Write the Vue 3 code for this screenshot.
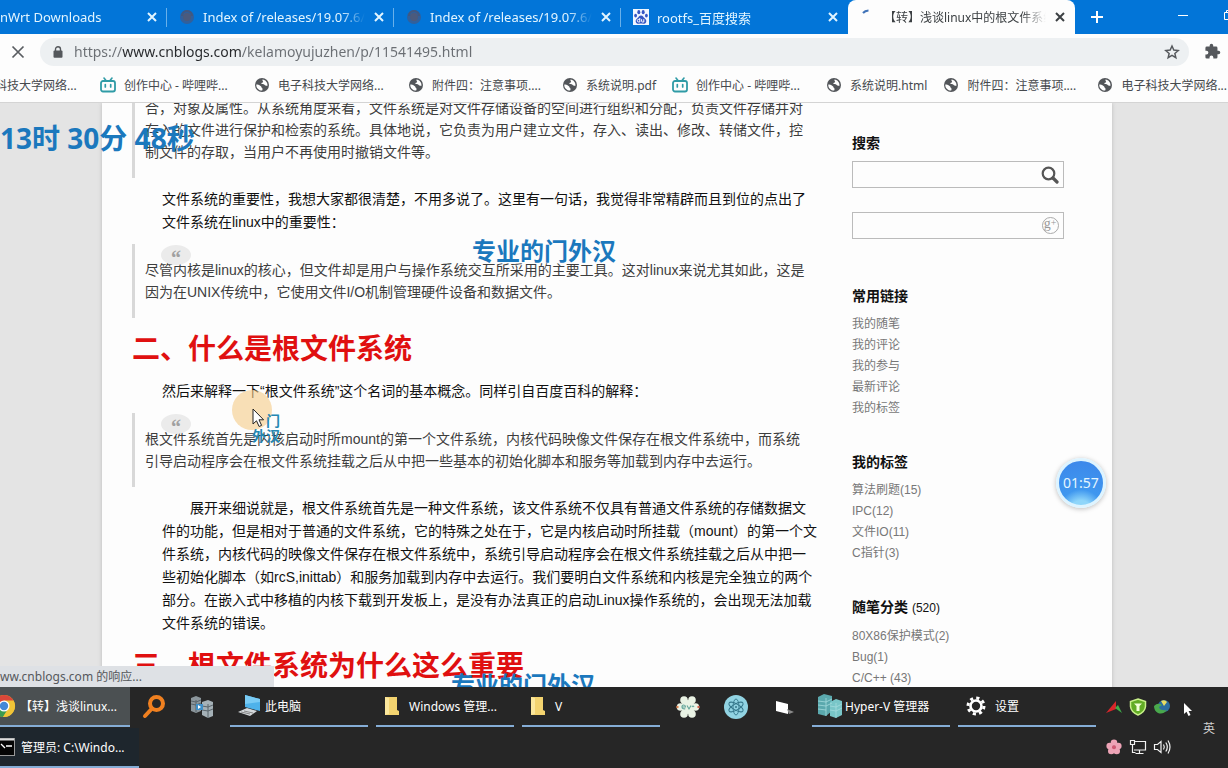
<script setup>

  import { ref } from 'vue';

  const url = ref('https://www.cnblogs.com/kelamoyujuzhen/p/11541495.html');
  const keyword = ref('');
  const googleKeyword = ref('');

  const tabs = ref([
    { title: 'nWrt Downloads', icon: '' },
    { title: 'Index of /releases/19.07.6/targets', icon: 'dot' },
    { title: 'Index of /releases/19.07.6/targets', icon: 'dot' },
    { title: 'rootfs_百度搜索', icon: 'baidu' },
    { title: '【转】浅谈linux中的根文件系统', icon: 'loading', active: true }
  ]);

  const bookmarks = [
    { title: '科技大学网络...', icon: '', long: true },
    { title: '创作中心 - 哔哩哔...', icon: 'tv', long: true },
    { title: '电子科技大学网络...', icon: 'globe', long: true },
    { title: '附件四：注意事项....', icon: 'globe', long: true },
    { title: '系统说明.pdf', icon: 'globe' },
    { title: '创作中心 - 哔哩哔...', icon: 'tv', long: true },
    { title: '系统说明.html', icon: 'globe' },
    { title: '附件四：注意事项....', icon: 'globe', long: true },
    { title: '电子科技大学网络...', icon: 'globe', long: true }
  ];

  const sections = [
    { title: '常用链接', links: ['我的随笔', '我的评论', '我的参与', '最新评论', '我的标签'] },
    { title: '我的标签', links: ['算法刷题(15)', 'IPC(12)', '文件IO(11)', 'C指针(3)'] },
    { title: '随笔分类', count: '(520)', links: ['80X86保护模式(2)', 'Bug(1)', 'C/C++ (43)'] }
  ];

  const closeTab = index => {

    tabs.value.splice(index, 1)

  };

</script>



<template>

  <div class="screen">

    <header class="browser">

      <div class="tabs">
        <div v-for="(tab, index) in tabs" v-bind:key="index" class="tab" :class="{ active: tab.active, first: !tab.icon }">
          <span class="tab-icon" v-if="tab.icon">
            <svg v-if="tab.icon === 'dot'" width="16" height="16" viewBox="0 0 16 16">
              <circle cx="8" cy="8" r="7" fill="#31609c" />
              <circle cx="8" cy="8" r="4" fill="#4b5a7c" />
              <path d="M3 7a5 5 0 0 1 10 0" fill="none" stroke="#42587f" stroke-width="2" />
            </svg>
            <svg v-if="tab.icon === 'baidu'" width="16" height="16" viewBox="0 0 16 16">
              <rect width="16" height="16" fill="#f2f7ff" />
              <g fill="#3556c4">
                <ellipse cx="5.8" cy="3.2" rx="1.5" ry="2.1" />
                <ellipse cx="10.2" cy="3.2" rx="1.5" ry="2.1" />
                <ellipse cx="2.6" cy="6.6" rx="1.4" ry="1.9" />
                <ellipse cx="13.4" cy="6.6" rx="1.4" ry="1.9" />
                <path d="M8 6.4c1.600 0 2.300 1.400 3.400 2.600 1.300 1.300 2.300 2.300 1.800 4-.6 1.900-2.600 1.900-5.200 1.600-2.600.3-4.600.3-5.200-1.600-.5-1.700.5-2.700 1.800-4C5.700 7.800 6.400 6.400 8 6.400z" />
              </g>
              <path d="M6.800 9v4H5.600a1.300 1.300 0 0 1 0-2.600h1.200M8.600 10.200v2q0 .8.8.8h1.400v-2.800" fill="none" stroke="#fff" stroke-width="1" />
            </svg>
            <svg v-if="tab.icon === 'loading'" width="16" height="16" viewBox="0 0 16 16">
              <path d="M3 4q2-2.400 5.500-2.600" fill="none" stroke="#4173b8" stroke-width="2" />
            </svg>
          </span>
          <span class="tab-title">{{ tab.title }}</span>
          <button class="tab-close" aria-label="关闭标签页" @click="closeTab(index)">
            <svg width="10" height="10" viewBox="0 0 10 10"><path d="M1 1l8 8M9 1l-8 8" stroke="currentColor" stroke-width="2" /></svg>
          </button>
        </div>
        <button class="tab-new" aria-label="新标签页">
          <svg width="12" height="12" viewBox="0 0 12 12"><path d="M6 0v12M0 6h12" stroke="#fff" stroke-width="2" /></svg>
        </button>
        <div class="window-buttons">
          <button aria-label="最小化"><svg width="10" height="10" viewBox="0 0 10 10"><path d="M0 5.500h10" stroke="#fff" /></svg></button>
          <button aria-label="还原"><svg width="10" height="10" viewBox="0 0 10 10"><path d="M.5 2.500h7v7h-7zM2.500 2.500v-2h7v7h-2" fill="none" stroke="#fff" /></svg></button>
        </div>
      </div>

      <div class="toolbar">
        <button class="stop" aria-label="停止加载">
          <svg width="14" height="14" viewBox="0 0 14 14"><path d="M1.500 1.500l11 11M12.500 1.500l-11 11" stroke="#5a5d61" stroke-width="1.700" /></svg>
        </button>
        <div class="address">
          <svg width="10" height="12" viewBox="0 0 10 12">
            <path d="M2.500 5V3.200a2.500 2.500 0 0 1 5 0V5" fill="none" stroke="#55585c" stroke-width="1.400" />
            <rect x="0.5" y="4.500" width="9" height="7.200" rx="1" fill="#55585c" />
          </svg>
          <input type="text" v-model="url" aria-label="地址栏" class="url">
          <button aria-label="为此标签页添加书签">
            <svg width="16" height="16" viewBox="0 0 24 24"><path d="M12 3l2.700 6.100 6.600.6-5 4.400 1.500 6.500-5.800-3.400-5.800 3.400 1.500-6.500-5-4.400 6.600-.6z" fill="none" stroke="#55585c" stroke-width="2.200" /></svg>
          </button>
        </div>
        <button class="extensions" aria-label="扩展程序">
          <svg width="17" height="17" viewBox="0 0 24 24"><path d="M20.500 11H19V7a2 2 0 0 0-2-2h-4V3.500a2.500 2.500 0 0 0-5 0V5H4a2 2 0 0 0-2 2v3.800h1.500a2.700 2.700 0 0 1 0 5.400H2V20a2 2 0 0 0 2 2h3.800v-1.500a2.700 2.700 0 0 1 5.400 0V22H17a2 2 0 0 0 2-2v-4h1.500a2.500 2.500 0 0 0 0-5z" fill="#55585c" /></svg>
        </button>
      </div>

      <nav class="bookmarks">
        <a href="#" v-for="(item, index) in bookmarks" v-bind:key="index" class="bookmark" :class="{ long: item.long, first: !item.icon }">
          <svg v-if="item.icon === 'tv'" width="16" height="16" viewBox="0 0 16 16">
            <path d="M4 1l2 2.500M12 1l-2 2.500" stroke="#2f9ba6" stroke-width="1.600" stroke-linecap="round" />
            <rect x="1" y="4" width="14" height="10.500" rx="2" fill="none" stroke="#2f9ba6" stroke-width="1.800" />
            <path d="M5.300 7.500v2.500M10.700 7.500v2.500" stroke="#2f9ba6" stroke-width="1.700" stroke-linecap="round" />
          </svg>
          <svg v-if="item.icon === 'globe'" width="16" height="16" viewBox="0 0 16 16">
            <circle cx="8" cy="8" r="7" fill="#53565a" />
            <path d="M2.300 7.500c2.500-.4 3 .8 4.200 1.400 1.300.5.600 1.600 1.500 2 .9.500.6 1.500.2 2.700-3.300.1-6.200-2.600-5.900-6.100z" fill="#fff" />
            <path d="M8.500 2.400c-.4 1.500.8 1.500.6 2.600-.4 1-1.900.5-1.800 1.500.3 1.200 2.300.3 3.200 1.300.7.8 1.500 1 3 .9.300-3-1.900-6-5-6.300z" fill="#fff" />
          </svg>
          <span>{{ item.title }}</span>
        </a>
      </nav>

    </header>

    <main class="page">

      <div class="home">

        <article class="post">
          <blockquote class="cut">
            合，对象及属性。从系统角度来看，文件系统是对文件存储设备的空间进行组织和分配，负责文件存储并对<br>
            存入的文件进行保护和检索的系统。具体地说，它负责为用户建立文件，存入、读出、修改、转储文件，控<br>
            制文件的存取，当用户不再使用时撤销文件等。
          </blockquote>
          <p>
            文件系统的重要性，我想大家都很清楚，不用多说了。这里有一句话，我觉得非常精辟而且到位的点出了<br>
            文件系统在linux中的重要性：
          </p>
          <blockquote>
            <span class="quote">“</span>
            尽管内核是linux的核心，但文件却是用户与操作系统交互所采用的主要工具。这对linux来说尤其如此，这是<br>
            因为在UNIX传统中，它使用文件I/O机制管理硬件设备和数据文件。
          </blockquote>
          <h1>二、什么是根文件系统</h1>
          <p>然后来解释一下“根文件系统”这个名词的基本概念。同样引自百度百科的解释：</p>
          <blockquote>
            <span class="quote">“</span>
            根文件系统首先是内核启动时所mount的第一个文件系统，内核代码映像文件保存在根文件系统中，而系统<br>
            引导启动程序会在根文件系统挂载之后从中把一些基本的初始化脚本和服务等加载到内存中去运行。
          </blockquote>
          <p class="indent">
            展开来细说就是，根文件系统首先是一种文件系统，该文件系统不仅具有普通文件系统的存储数据文<br>
            件的功能，但是相对于普通的文件系统，它的特殊之处在于，它是内核启动时所挂载（mount）的第一个文<br>
            件系统，内核代码的映像文件保存在根文件系统中，系统引导启动程序会在根文件系统挂载之后从中把一<br>
            些初始化脚本（如rcS,inittab）和服务加载到内存中去运行。我们要明白文件系统和内核是完全独立的两个<br>
            部分。在嵌入式中移植的内核下载到开发板上，是没有办法真正的启动Linux操作系统的，会出现无法加载<br>
            文件系统的错误。
          </p>
          <h1>三、根文件系统为什么这么重要</h1>
        </article>

        <aside class="sidebar">
          <section class="search">
            <h2><label for="keyword">搜索</label></h2>
            <form class="field" @submit.prevent>
              <input type="text" id="keyword" v-model="keyword">
              <button type="submit" aria-label="找找看">
                <svg width="18" height="18" viewBox="0 0 18 18">
                  <circle cx="7.500" cy="7.500" r="5.800" fill="none" stroke="#555" stroke-width="2.200" />
                  <path d="M12 12l4 4" stroke="#555" stroke-width="3.200" stroke-linecap="round" />
                </svg>
              </button>
            </form>
            <form class="field" @submit.prevent>
              <input type="text" v-model="googleKeyword" aria-label="谷歌搜索">
              <button type="submit" aria-label="谷歌搜索"><span class="google">g<sup>+</sup></span></button>
            </form>
          </section>
          <section v-for="section in sections" v-bind:key="section.title">
            <h2>{{ section.title }} <small v-if="section.count">{{ section.count }}</small></h2>
            <ul>
              <li v-for="link in section.links" v-bind:key="link"><a href="#">{{ link }}</a></li>
            </ul>
          </section>
        </aside>

      </div>

      <div class="mark mark-clock">13时 30分 48秒</div>
      <div class="mark mark-middle">专业的门外汉</div>
      <div class="mark mark-bottom">专业的门外汉</div>
      <div class="pointer">
        <span>门<br>外汉</span>
        <svg width="14" height="20" viewBox="0 0 14 20"><path d="M1 1v15l3.500-3.200 2.600 5.700 2.500-1.100-2.600-5.600h4.600z" fill="#fff" stroke="#222" /></svg>
      </div>
      <div class="timer">01:57</div>
      <div class="status">ww.cnblogs.com 的响应...</div>

    </main>

    <footer class="taskbar">

      <div class="programs">
        <div class="row">
          <button class="task current">
            <svg class="chrome" width="24" height="24" viewBox="0 0 24 24">
              <circle cx="12" cy="12" r="11" fill="#e8b52c" />
              <path d="M12 12L2.500 6.500A11 11 0 0 1 21.500 6.500z" fill="#d9473a" />
              <path d="M12 12L2.500 6.500A11 11 0 0 0 11 23l5.500-9z" fill="#3c9a50" />
              <path d="M12 6.500h9.500a11 11 0 0 1-10.500 16.500l5.800-9z" fill="#f0c437" />
              <circle cx="12" cy="12" r="5.500" fill="#fff" />
              <circle cx="12" cy="12" r="4.200" fill="#4389d8" />
            </svg>
            <span>【转】浅谈linux...</span>
          </button>
          <button class="launch" aria-label="Everything">
            <svg width="26" height="26" viewBox="0 0 26 26">
              <circle cx="15.500" cy="9.500" r="6.500" fill="none" stroke="#f08020" stroke-width="4" />
              <path d="M11 14.500l-7 7.500" stroke="#f08020" stroke-width="4" stroke-linecap="round" />
            </svg>
          </button>
          <button class="launch" aria-label="PuTTY">
            <svg width="24" height="24" viewBox="0 0 24 24">
              <path d="M1 3l5-2 5 2v13l-5 2-5-2z" fill="#8b969c" />
              <path d="M12 7l6-2 5 2v14l-5 2-6-3z" fill="#a5b1b7" />
              <path d="M6 5v12M18 9v14M1 6l5 1 5-2M1 9l5 1 5-2M12 11l6 1 5-2M12 15l6 1 5-2" stroke="#59646b" fill="none" />
              <rect x="6" y="9" width="7" height="6" fill="#3f8fc7" />
              <path d="M8 10v4l3-2z" fill="#fff" />
            </svg>
          </button>
          <button class="task">
            <svg width="24" height="24" viewBox="0 0 24 24">
              <path d="M8 1l15 4v12L8 13z" fill="#4eb2ea" />
              <path d="M8 1l15 4v3L8 10z" fill="#79cbf5" />
              <path d="M1 18l9-4 10 3-7 5z" fill="#d5d9dc" />
              <path d="M4 18l9 2M7 17l9 2" stroke="#888" />
            </svg>
            <span>此电脑</span>
          </button>
          <button class="task folder">
            <svg width="16" height="20" viewBox="0 0 16 20">
              <path d="M1 1h12v13l2 1v4H1z" fill="#f3d36f" />
              <path d="M1 1l4 1v16l-4 1z" fill="#fbe79d" />
            </svg>
            <span>Windows 管理...</span>
          </button>
          <button class="task folder">
            <svg width="16" height="20" viewBox="0 0 16 20">
              <path d="M1 1h12v13l2 1v4H1z" fill="#f3d36f" />
              <path d="M1 1l4 1v16l-4 1z" fill="#fbe79d" />
            </svg>
            <span>V</span>
          </button>
          <button class="launch" aria-label="EV录屏">
            <svg width="24" height="24" viewBox="0 0 24 24">
              <g fill="#e9f2e4">
                <circle cx="8" cy="5" r="3.800" /><circle cx="16" cy="5" r="3.800" />
                <circle cx="4.500" cy="12" r="3.800" /><circle cx="19.500" cy="12" r="3.800" />
                <circle cx="8" cy="19" r="3.800" /><circle cx="16" cy="19" r="3.800" />
                <circle cx="12" cy="12" r="7" />
              </g>
              <path d="M6 12h3.500q0-2-1.800-2T6 12q0 2.200 3.300 1.800M11 10.500l2 3.500 2-3.500M16 12q1-2 2 0" fill="none" stroke="#63a59a" stroke-width="1.100" />
              <circle cx="1.500" cy="12" r="1.200" fill="#e0824f" />
              <circle cx="22.500" cy="12" r="1.200" fill="#d2604b" />
            </svg>
          </button>
          <button class="launch" aria-label="Electron">
            <svg width="24" height="24" viewBox="0 0 24 24">
              <circle cx="12" cy="12" r="12" fill="#91d3e2" />
              <g fill="none" stroke="#34768a" stroke-width="0.900">
                <ellipse cx="12" cy="12" rx="8" ry="3" transform="rotate(30 12 12)" />
                <ellipse cx="12" cy="12" rx="8" ry="3" transform="rotate(90 12 12)" />
                <ellipse cx="12" cy="12" rx="8" ry="3" transform="rotate(150 12 12)" />
              </g>
              <circle cx="12" cy="12" r="1" fill="#34768a" />
            </svg>
          </button>
          <button class="launch" aria-label="画板">
            <svg width="20" height="18" viewBox="0 0 20 18">
              <path d="M2 3l12 3v10L2 13z" fill="#fff" />
              <path d="M13 11l7 3-5 2z" fill="#8a8a8a" />
            </svg>
          </button>
          <button class="task tight">
            <svg width="26" height="26" viewBox="0 0 26 26">
              <path d="M1 4l6-3 8 2v15l-6 5-8-2z" fill="#5ba9ae" />
              <path d="M13 9l6-3 6 2v14l-6 3-6-2z" fill="#79c6c8" />
              <path d="M1 8l8 1 6-3M1 12l8 1 6-3M1 16l8 1M13 13l6 1 6-3M13 17l6 1 6-3M9 5v18M19 10v15" stroke="#a5dcdd" stroke-width="0.800" fill="none" />
            </svg>
            <span>Hyper-V 管理器</span>
          </button>
          <button class="task folder">
            <svg width="20" height="20" viewBox="0 0 20 20">
              <circle cx="10" cy="10" r="5.500" fill="none" stroke="#fff" stroke-width="2.600" />
              <circle cx="10" cy="10" r="8" fill="none" stroke="#fff" stroke-width="3" stroke-dasharray="3.140 3.140" />
            </svg>
            <span>设置</span>
          </button>
        </div>
        <div class="row">
          <button class="task console">
            <svg width="24" height="18" viewBox="0 0 24 18">
              <rect x="0.500" y="0.500" width="23" height="17" fill="#050505" stroke="#999" />
              <path d="M1 1.500h22" stroke="#ddd" stroke-width="2" />
              <path d="M10 6l4 4M15 8h6" stroke="#fff" stroke-width="1.300" />
            </svg>
            <span>管理员: C:\Windo...</span>
          </button>
        </div>
      </div>

      <div class="tray">
        <div class="row">
          <svg width="18" height="16" viewBox="0 0 18 16"><path d="M1 14L11 2v8z" fill="#d8262a" /><path d="M10 9l3-3 4 8z" fill="#3fae49" /></svg>
          <svg width="18" height="18" viewBox="0 0 18 18"><path d="M9 1l7.500 2.500v5Q16 14 9 17 2 14 1.500 8.500v-5z" fill="#62ac25" stroke="#c8f08a" stroke-width="1.500" /><path d="M5 5.500h8l-2.500 2.500v5h-3V8z" fill="#f1ffd8" /></svg>
          <svg width="18" height="16" viewBox="0 0 18 16"><circle cx="11" cy="7" r="6" fill="#2c6da0" /><path d="M8 2q4-2 6 1l-3 4z" fill="#e8dc62" /><path d="M1 7q4-4 8-1l-3 2q1 4 8 3-4 5-9 3-4-2-4-7z" fill="#49a84c" /></svg>
        </div>
        <div class="row">
          <svg width="16" height="16" viewBox="0 0 16 16"><g fill="#eda3b6"><circle cx="8" cy="3.800" r="3.300" /><circle cx="12.300" cy="7" r="3.300" /><circle cx="10.700" cy="12" r="3.300" /><circle cx="5.300" cy="12" r="3.300" /><circle cx="3.700" cy="7" r="3.300" /></g><circle cx="8" cy="8.300" r="2" fill="#cf5872" /></svg>
          <svg width="18" height="16" viewBox="0 0 18 16"><path d="M5 2.500h11.500v8.500H5M10.500 11v3M6.500 14.500h8M1.500 1.500h4v4h-4zM3.500 5.500v8h3" fill="none" stroke="#f2f2f2" stroke-width="1.200" /></svg>
          <svg width="18" height="16" viewBox="0 0 18 16"><path d="M1.500 5.500h3l3.500-3v11l-3.500-3h-3zM10.500 5.500q1.600 2.500 0 5M12.800 3.500q3 4.500 0 9M15 1.500q4 6.500 0 13" fill="none" stroke="#f2f2f2" stroke-width="1.200" /></svg>
        </div>
      </div>

      <button class="language">英</button>
      <svg class="tray-pointer" width="10" height="14" viewBox="0 0 10 14"><path d="M1 0v11l2.500-2.300L5.500 13l2-.9-1.900-4.100h3.400z" fill="#fff" /></svg>

    </footer>

  </div>

</template>



<style>

  /*==========Base==========*/
    body {
      margin: 0;
      overflow: hidden;
    }

</style>

<style scoped>

  /*==========Reset==========*/
    *, *::before, *::after {
      margin: 0;
      padding: 0;
      box-sizing: border-box;
    }
    button {
      display: flex;
      align-items: center;
      justify-content: center;
      flex-shrink: 0;
      border: 0;
      background: none;
      color: inherit;
      font: inherit;
      cursor: pointer;
    }
    input {
      border: 0;
      outline: none;
      background: none;
      font: inherit;
    }
    a {
      color: inherit;
      text-decoration: none;
    }
    svg {
      display: block;
      flex-shrink: 0;
    }

    .screen {
      display: flex;
      flex-direction: column;
      height: 100vh;
      overflow: hidden;
      font-family: 'Noto Sans', 'Noto Sans CJK SC', sans-serif;
      font-size: 12px;
    }

  /*==========Browser==========*/
    .browser {
      flex-shrink: 0;
      background: #fdfdfd;
      border-bottom: 1px solid #d4d4d4;
    }
    .tabs {
      display: flex;
      height: 34px;
      background: #0275d8;
      color: #e2f5ff;
      overflow: hidden;
    }
    .tab {
      position: relative;
      display: flex;
      align-items: center;
      flex: 0 0 227px;
      min-width: 0;
      height: 34px;
      padding: 0 7px 0 12px;
      font-size: 13px;
    }
    .tab.first {
      flex-basis: 167px;
      padding-left: 0;
    }
    .tab:not(.active)::after {
      content: '';
      position: absolute;
      right: 0;
      top: 8px;
      width: 1px;
      height: 19px;
      background: #69b0ea;
    }
    .tab:has(+ .active)::after {
      display: none;
    }
    .tab.active {
      background: #fdfdfd;
      border-radius: 8px 8px 0 0;
      color: #3c4043;
      font-size: 12px;
    }
    .tab-icon {
      flex: 0 0 24px;
    }
    .tab-title {
      flex: 1;
      min-width: 0;
      overflow: hidden;
      white-space: nowrap;
      -webkit-mask-image: linear-gradient(90deg, #000 85%, transparent);
      mask-image: linear-gradient(90deg, #000 85%, transparent);
    }
    .tab-close {
      width: 16px;
      height: 16px;
      margin-left: 6px;
    }
    .tab-new {
      width: 44px;
    }
    .window-buttons {
      display: flex;
      flex-shrink: 0;
      margin-left: auto;
      margin-right: -24px;
      padding-bottom: 4px;
    }
    .window-buttons button {
      width: 46px;
    }
    .toolbar {
      display: flex;
      align-items: center;
      height: 35px;
      padding-right: 8px;
    }
    .stop {
      width: 36px;
      margin-right: 4px;
    }
    .address {
      flex: 1;
      display: flex;
      align-items: center;
      height: 28px;
      padding: 0 9px 0 13px;
      border-radius: 14px;
      background: #edf0f2;
    }
    .url {
      flex: 1;
      height: 28px;
      margin-left: 11px;
      font-size: 14px;
      color: #6a6e73;
      background: linear-gradient(90deg, #6a6e73 48px, #26282b 48px 168px, #6a6e73 168px);
      -webkit-background-clip: text;
      background-clip: text;
      -webkit-text-fill-color: transparent;
    }
    .extensions {
      width: 30px;
      margin-left: 8px;
      margin-right: -7px;
    }
    .bookmarks {
      display: flex;
      height: 33px;
      overflow: hidden;
      color: #46494d;
    }
    .bookmark {
      display: flex;
      align-items: center;
      flex-shrink: 0;
      gap: 8px;
      padding-right: 16px;
      white-space: nowrap;
      padding-bottom: 2px;
    }
    .bookmark.long {
      width: 154px;
      padding-right: 0;
    }
    .bookmark.first {
      width: 100px;
      margin-left: -5px;
      margin-right: 5px;
    }

  /*==========Page==========*/
    .page {
      position: relative;
      flex: 1;
      min-height: 0;
      overflow: hidden;
      padding-right: 14px;
      background: #e4e4e4;
    }
    .home {
      display: flex;
      max-width: 1010px;
      min-height: 100%;
      margin: 0 auto;
      padding-left: 30px;
      background: #fdfdfd;
      box-shadow: 0 0 4px #bbb;
      font-family: 'Liberation Sans', 'Noto Sans CJK SC', sans-serif;
    }
    .post {
      flex: 1;
      margin-top: -6px;
      font-size: 14px;
      white-space: nowrap;
      color: #111;
    }
    .post p {
      margin-bottom: 10px;
      padding-left: 30px;
      line-height: 23px;
    }
    .post .indent {
      text-indent: 28px;
    }
    blockquote {
      position: relative;
      margin-bottom: 10px;
      padding: 15px 0 15px 10px;
      border-left: 3px solid #d8d8d8;
      line-height: 22px;
      color: #3d3d3d;
    }
    blockquote.cut {
      padding-top: 0;
    }
    .quote {
      position: absolute;
      left: 26px;
      top: 1px;
      width: 30px;
      height: 20px;
      border-radius: 50%;
      background: #ebebeb;
      color: #a0a0a0;
      font-family: 'Liberation Serif', serif;
      font-size: 20px;
      font-weight: bold;
      line-height: 26px;
      text-align: center;
    }
    h1 {
      margin-bottom: 8px;
      font-size: 28px;
      line-height: 44px;
      color: #e01010;
    }
    .sidebar {
      flex: 0 0 260px;
      padding-top: 30px;
      line-height: 21px;
      color: #777;
    }
    .sidebar section {
      margin-bottom: 33px;
    }
    .sidebar .search {
      margin-bottom: 47px;
    }
    .sidebar h2 {
      margin-bottom: 7px;
      font-size: 14px;
      line-height: 21px;
      color: #111;
    }
    .sidebar small {
      font-size: 12px;
      font-weight: normal;
    }
    .sidebar ul {
      list-style: none;
    }
    .field {
      display: flex;
      width: 212px;
      height: 27px;
      margin-bottom: 24px;
      border: 1px solid #bbb;
    }
    .field input {
      flex: 1;
      min-width: 0;
      padding: 0 6px;
    }
    .field button {
      width: 26px;
    }
    .google {
      display: flex;
      justify-content: center;
      width: 17px;
      height: 17px;
      border: 1px solid #aaa;
      border-radius: 50%;
      color: #999;
      font-family: 'Liberation Serif', serif;
      font-size: 14px;
      line-height: 12px;
    }
    .google sup {
      font-size: 10px;
      line-height: 10px;
    }

  /*==========Overlays==========*/
    .mark {
      position: absolute;
      font-size: 24px;
      font-weight: bold;
      line-height: 36px;
      white-space: nowrap;
      color: #1b78bd;
    }
    .mark-clock {
      left: 0;
      top: 17px;
      font-size: 28px;
    }
    .mark-middle {
      left: 472px;
      top: 130px;
    }
    .mark-bottom {
      left: 451px;
      top: 564px;
    }
    .pointer {
      position: absolute;
      left: 232px;
      top: 287px;
      width: 40px;
      height: 40px;
      border-radius: 50%;
      background: rgba(245, 203, 135, .6);
    }
    .pointer svg {
      position: absolute;
      left: 20px;
      top: 18px;
    }
    .pointer span {
      position: absolute;
      left: 20px;
      top: 23px;
      width: 28px;
      font-size: 14px;
      font-weight: bold;
      line-height: 15px;
      text-align: right;
      color: #2487b3;
    }
    .timer {
      position: absolute;
      right: 122px;
      top: 355px;
      width: 50px;
      height: 50px;
      border: 3px solid #def4ff;
      border-radius: 50%;
      background: radial-gradient(circle at 50% 115%, #8fd6fa 20%, #3f97ef 40%, #3b86ea);
      box-shadow: 0 1px 5px #bbb;
      color: #e4f6ff;
      font-size: 14px;
      line-height: 44px;
      text-align: center;
    }
    .status {
      position: absolute;
      left: 0;
      bottom: 0;
      width: 274px;
      height: 21px;
      background: #dee1e5;
      color: #55585c;
      line-height: 21px;
    }

  /*==========Taskbar==========*/
    .taskbar {
      position: relative;
      display: flex;
      flex-shrink: 0;
      height: 81px;
      background: #262626;
      color: #fff;
      overflow: hidden;
    }
    .row {
      display: flex;
      height: 41px;
    }
    .task {
      justify-content: flex-start;
      gap: 4px;
      width: 138px;
      height: 40px;
      margin: 0 4px;
      padding-left: 7px;
      border-bottom: 2px solid #85add6;
      white-space: nowrap;
    }
    .task.current {
      width: 130px;
      margin: 0;
      padding: 0;
      background: #4b5052;
    }
    .task.current svg {
      margin-left: -8px;
    }
    .task.folder {
      gap: 9px;
      padding-left: 8px;
    }
    .task.tight {
      padding-left: 5px;
      gap: 2px;
    }
    .task.console {
      width: 139px;
      margin: 0;
      padding: 0;
      gap: 6px;
      background: #1e262d;
    }
    .task.console svg {
      margin-left: -9px;
    }
    .launch {
      width: 48px;
      height: 40px;
    }
    .tray {
      flex: 0 0 72px;
      margin-left: auto;
    }
    .tray .row {
      align-items: center;
      height: 40px;
    }
    .tray svg {
      width: 24px;
    }
    .language {
      width: 38px;
      margin-left: 16px;
      color: #d0d0d0;
    }
    .tray-pointer {
      position: absolute;
      right: 35px;
      top: 16px;
    }

</style>
